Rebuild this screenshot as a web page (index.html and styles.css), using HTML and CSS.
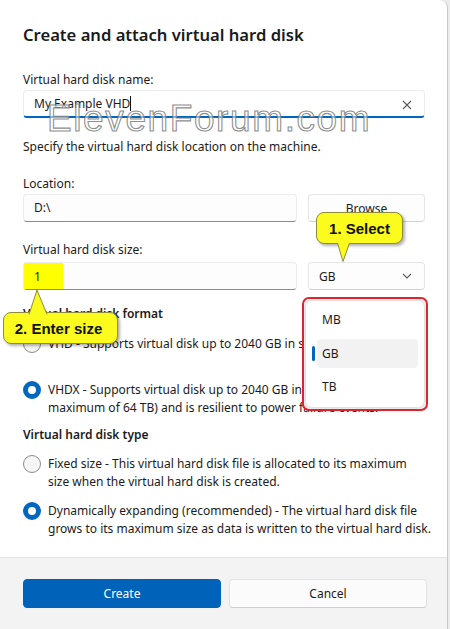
FILE: index.html
```html
<!DOCTYPE html>
<html>
<head>
<meta charset="utf-8">
<link rel="stylesheet" href="styles.css">
</head>
<body>
<div class="window">
  <div class="content">
    <h1 class="title">Create and attach virtual hard disk</h1>

    <div class="label first">Virtual hard disk name:</div>
    <div class="textbox focused">
      <span class="value">My Example VHD</span><span class="caret"></span>
      <svg class="clear" width="10" height="10" viewBox="0 0 10 10"><path d="M1 1 L9 9 M9 1 L1 9" stroke="#5c5c5c" stroke-width="1.1" fill="none"/></svg>
    </div>

    <p class="hint">Specify the virtual hard disk location on the machine.</p>

    <div class="label">Location:</div>
    <div class="row">
      <div class="textbox"><span class="value">D:\</span></div>
      <div class="button">Browse</div>
    </div>

    <div class="label size-label">Virtual hard disk size:</div>
    <div class="row">
      <div class="textbox"><span class="highlight">1</span></div>
      <div class="combo"><span>GB</span>
        <svg width="10" height="6" viewBox="0 0 10 6"><path d="M1 1 L5 5 L9 1" stroke="#5c5c5c" stroke-width="1.1" fill="none"/></svg>
      </div>
    </div>

    <h2 class="section first-section">Virtual hard disk format</h2>
    <div class="radio">
      <span class="dot"></span>
      <span class="rtext">VHD - Supports virtual disk up to 2040 GB in size.</span>
    </div>
    <div class="radio checked gap-vhdx">
      <span class="dot"></span>
      <span class="rtext">VHDX - Supports virtual disk up to 2040 GB in size (Supported<br>maximum of 64 TB) and is resilient to power failure events.</span>
    </div>

    <h2 class="section second-section">Virtual hard disk type</h2>
    <div class="radio gap-type">
      <span class="dot"></span>
      <span class="rtext">Fixed size - This virtual hard disk file is allocated to its maximum<br>size when the virtual hard disk is created.</span>
    </div>
    <div class="radio checked gap-dyn">
      <span class="dot"></span>
      <span class="rtext">Dynamically expanding (recommended) - The virtual hard disk file<br>grows to its maximum size as data is written to the virtual hard disk.</span>
    </div>
  </div>

  <div class="footer">
    <div class="btn primary">Create</div>
    <div class="btn">Cancel</div>
  </div>

  <div class="watermark">ElevenForum.com</div>

  <div class="dropdown-mark">
    <div class="popup">
      <div class="item">MB</div>
      <div class="item selected"><span class="indicator"></span>GB</div>
      <div class="item">TB</div>
    </div>
  </div>

  <div class="callout callout-select">1. Select
    <svg class="tail tail-down" width="16" height="20" viewBox="0 0 16 20"><path d="M0.5 0 L6 18.5 L12.5 0" fill="#fbfb1e" stroke="#8c8c3c" stroke-width="1"/></svg>
  </div>
  <div class="callout callout-size">2. Enter size
    <svg class="tail tail-up" width="22" height="26" viewBox="0 0 22 26"><path d="M2 25.5 L10 1 L20 25.5" fill="#fbfb1e" stroke="#8c8c3c" stroke-width="1"/></svg>
  </div>
</div>
</body>
</html>
```

FILE: styles.css
```css
* { box-sizing: border-box; }

html, body {
  margin: 0;
  padding: 0;
  background: #ececec;
  width: 450px;
  height: 629px;
  overflow: hidden;
}

body {
  font-family: "Noto Sans", "Open Sans", sans-serif;
  font-size: 12px;
  color: #1b1b1b;
}

.window {
  position: relative;
  width: 448px;
  height: 629px;
  background: #ffffff;
  border-right: 1px solid #c9c9c9;
  border-top-right-radius: 8px;
  display: flex;
  flex-direction: column;
}

.content {
  flex: 1;
  padding: 21px 22px 0 23px;
}

.title {
  margin: 0;
  font-size: 16.6px;
  font-weight: 600;
  line-height: 28px;
  color: #1a1a1a;
}

.label {
  line-height: 18px;
  margin-top: 19px;
  margin-bottom: 1px;
}
.label.first { margin-top: 22px; }
.label.size-label { margin-bottom: 3px; }

.textbox {
  position: relative;
  height: 28px;
  background: #fdfdfd;
  border: 1px solid #ececec;
  border-bottom: 1px solid #8a8a8a;
  border-radius: 4px;
  display: flex;
  align-items: center;
  padding-left: 10px;
}
.textbox.focused {
  background: #ffffff;
  border-bottom: 2px solid #0067c0;
}
.textbox .value { line-height: 18px; }
.caret {
  display: inline-block;
  width: 1px;
  height: 15px;
  background: #111;
}
.clear {
  position: absolute;
  right: 12px;
  top: 9px;
}

.hint {
  margin: 20px 0 0 0;
  line-height: 18px;
}

.row {
  display: grid;
  grid-template-columns: 1fr 117px;
  column-gap: 11px;
}

.button, .combo {
  height: 28px;
  background: #fdfdfd;
  border: 1px solid #e6e6e6;
  border-bottom-color: #d2d2d2;
  border-radius: 4px;
}
.button {
  display: flex;
  align-items: center;
  justify-content: center;
}
.combo {
  display: flex;
  align-items: center;
  justify-content: space-between;
  padding: 0 12px 0 10px;
}

.highlight {
  display: flex;
  align-items: center;
  margin-left: -10px;
  height: 26px;
  width: 39px;
  padding-left: 10px;
  background: #ffff00;
}

.section {
  margin: 15px 0 0 0;
  font-size: 12px;
  font-weight: 600;
  line-height: 18px;
}
.section.second-section { margin-top: 8px; }

.radio {
  display: flex;
  align-items: flex-start;
  margin-top: 12px;
  line-height: 18.5px;
}
.radio .dot {
  flex: none;
  width: 18px;
  height: 18px;
  border-radius: 50%;
  border: 1px solid #8b8b8b;
  background: #f6f6f6;
  margin-right: 7px;
}
.radio.checked .dot {
  border: 5px solid #0067c0;
  background: #ffffff;
}
.rtext { white-space: nowrap; }
.gap-vhdx { margin-top: 27px; }
.gap-type { margin-top: 11px; }
.gap-dyn { margin-top: 10px; }

.footer {
  height: 72px;
  background: #f3f3f3;
  border-top: 1px solid #e5e5e5;
  display: grid;
  grid-template-columns: 198px 198px;
  column-gap: 8px;
  padding: 21px 0 0 23px;
}
.btn {
  height: 29px;
  border-radius: 4px;
  display: flex;
  align-items: center;
  justify-content: center;
  background: #fbfbfb;
  border: 1px solid #e3e3e3;
  border-bottom-color: #cfcfcf;
}
.btn.primary {
  background: #0063b9;
  border-color: #0063b9;
  color: #ffffff;
}

/* overlays */
.watermark {
  position: absolute;
  left: 47px;
  top: 97px;
  font-family: "Liberation Sans", Arial, sans-serif;
  font-size: 37px;
  letter-spacing: 1.6px;
  line-height: 44px;
  color: rgba(255, 255, 255, 0.55);
  -webkit-text-stroke: 1.1px rgba(120, 120, 120, 0.85);
  white-space: nowrap;
}

.dropdown-mark {
  position: absolute;
  left: 302px;
  top: 297px;
  width: 126px;
  height: 114px;
  border: 2px solid #e0262e;
  border-radius: 7px;
  background: #f4f4f4;
  padding: 2px;
}
.popup {
  height: 100%;
  background: #ffffff;
  border-radius: 6px;
  box-shadow: 0 0 4px rgba(0, 0, 0, 0.18);
  padding: 2px 6px 0 5px;
}
.item {
  position: relative;
  height: 29px;
  margin-top: 4px;
  display: flex;
  align-items: center;
  padding-left: 11px;
  border-radius: 4px;
}
.item:first-child { margin-top: 2px; }
.item.selected {
  background: #f2f2f2;
  margin-top: 5px;
  margin-left: 6px;
  padding-left: 5px;
}
.indicator {
  position: absolute;
  left: -5px;
  top: 7px;
  width: 3px;
  height: 15px;
  border-radius: 2px;
  background: #0067c0;
}

.callout {
  position: absolute;
  background: #fbfb1e;
  border: 1px solid #8c8c3c;
  border-radius: 8px;
  box-shadow: 2px 2px 3px rgba(0, 0, 0, 0.3);
  font-family: "Liberation Sans", Arial, sans-serif;
  font-weight: bold;
  font-size: 15px;
  color: #111;
  display: flex;
  align-items: center;
  justify-content: center;
}
.callout-select {
  left: 316px;
  top: 212px;
  width: 87px;
  height: 32px;
}
.callout-size {
  left: 3px;
  top: 312px;
  width: 115px;
  height: 32px;
  padding-right: 4px;
}
.tail { position: absolute; }
.tail-down { left: 20px; top: 30px; }
.tail-up { left: 23px; top: -24px; }
```
